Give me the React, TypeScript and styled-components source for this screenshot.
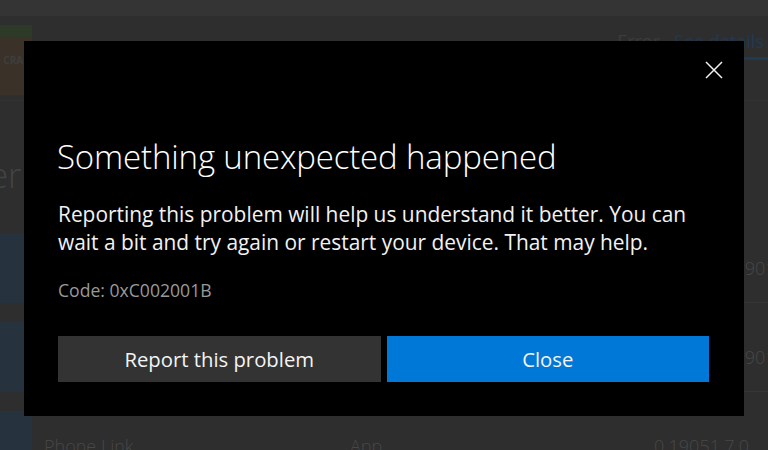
import React from "react";
import styled, { createGlobalStyle } from "styled-components";

const Global = createGlobalStyle`
  html, body { margin: 0; padding: 0; background: #2e2e2e; }
  body { width: 768px; height: 450px; overflow: hidden; font-family: "Open Sans", "Noto Sans", sans-serif; }
  * { box-sizing: border-box; }
`;

const Page = styled.div`
  position: relative;
  width: 768px;
  height: 450px;
  overflow: hidden;
  background: #2e2e2e;
  display: flex;
  flex-direction: column;
`;

const TitleBar = styled.div`
  height: 16px;
  background: #343434;
  flex: none;
`;

const TopSection = styled.div`
  height: 84px;
  display: flex;
  justify-content: space-between;
  flex: none;
`;

const Thumb = styled.div<{ $kind: "craft" | "blue" }>`
  width: 32px;
  height: 70px;
  margin-top: ${(p) => (p.$kind === "craft" ? "9px" : "0")};
  flex: none;
  background: ${(p) =>
    p.$kind === "craft"
      ? "linear-gradient(#2c3a27 0 12px, #3a3128 12px 100%)"
      : "#26323d"};
  display: flex;
  align-items: center;
  justify-content: center;
  color: #3e3e3e;
  font-size: 10px;
  font-weight: 700;
  overflow: hidden;
`;

const StatusGroup = styled.div`
  display: flex;
  flex-direction: column;
  align-items: flex-end;
  padding-top: 12px;
`;

const StatusText = styled.div`
  display: flex;
  gap: 14px;
  font-size: 18px;
  line-height: 26px;
  padding-right: 4px;
  white-space: nowrap;
`;

const ErrorLabel = styled.span`
  color: #3c3c3c;
`;

const DetailsLink = styled.span`
  color: #213a50;
`;

const Underline = styled.div`
  width: 24px;
  height: 3px;
  margin-top: 3px;
  background: #1f3a52;
`;

const SectionHeading = styled.div`
  height: 133px;
  flex: none;
  border-top: 1px solid #333;
  display: flex;
  align-items: center;
  padding-top: 16px;
  margin-left: -68px;
  font-size: 34px;
  font-weight: 300;
  color: #444;
  white-space: nowrap;
`;

const Row = styled.div`
  height: 89px;
  flex: none;
  display: flex;
  align-items: flex-start;
`;

const RowBody = styled.div`
  flex: 1;
  height: 70px;
  display: grid;
  grid-template-columns: 306px 304px 1fr;
  align-items: center;
  padding-left: 12px;
  font-size: 18px;
  color: #474747;
  font-weight: 300;
  border-bottom: 1px solid #363636;
  white-space: nowrap;
`;

const Overlay = styled.div`
  position: absolute;
  left: 24px;
  top: 41px;
  width: 720px;
  height: 375px;
  background: #000;
  padding: 0 35px 0 34px;
  display: flex;
  flex-direction: column;
`;

const CloseIcon = styled.button`
  position: absolute;
  right: 21px;
  top: 20px;
  width: 18px;
  height: 18px;
  padding: 0;
  border: 0;
  background: transparent;
  display: flex;
`;

const Title = styled.h1`
  margin: 96px 0 0 -1px;
  font-size: 33px;
  line-height: 40px;
  font-weight: 300;
  color: #fff;
  letter-spacing: -0.15px;
  white-space: nowrap;
`;

const Body = styled.p`
  margin: 23px 0 0 0;
  max-width: 635px;
  font-size: 20.9px;
  line-height: 28px;
  color: #f2f2f2;
  font-weight: 400;
`;

const Code = styled.p`
  margin: 23px 0 0 0;
  font-size: 17.6px;
  line-height: 22px;
  color: #999;
`;

const Buttons = styled.div`
  margin-top: 35px;
  display: grid;
  grid-template-columns: 1fr 1fr;
  gap: 6px;
`;

const Btn = styled.button<{ $primary?: boolean }>`
  height: 46px;
  border: 0;
  padding: 0;
  font-family: inherit;
  font-size: 20.3px;
  color: #f4f4f4;
  background: ${(p) => (p.$primary ? "#0078d7" : "#333333")};
`;

export default function App() {
  return (
    <>
      <Global />
      <Page>
        <TitleBar />
        <TopSection>
          <Thumb $kind="craft">CRAF</Thumb>
          <StatusGroup>
            <StatusText>
              <ErrorLabel>Error</ErrorLabel>
              <DetailsLink>See details</DetailsLink>
            </StatusText>
            <Underline />
          </StatusGroup>
        </TopSection>
        <SectionHeading>Other</SectionHeading>
        <Row>
          <Thumb $kind="blue" />
          <RowBody>
            <span>Xbox Game Bar</span>
            <span>App</span>
            <span>10.2305.11901.0</span>
          </RowBody>
        </Row>
        <Row>
          <Thumb $kind="blue" />
          <RowBody>
            <span>Movies &amp; TV</span>
            <span>App</span>
            <span>10.2207.21901.0</span>
          </RowBody>
        </Row>
        <Row>
          <Thumb $kind="blue" />
          <RowBody>
            <span>Phone Link</span>
            <span>App</span>
            <span>0.19051.7.0</span>
          </RowBody>
        </Row>
        <Overlay role="dialog">
          <CloseIcon aria-label="Close">
            <svg width="18" height="18" viewBox="0 0 18 18">
              <path d="M1 1 L17 17 M17 1 L1 17" stroke="#f2f2f2" strokeWidth="1.5" fill="none" />
            </svg>
          </CloseIcon>
          <Title>Something unexpected happened</Title>
          <Body>
            Reporting this problem will help us understand it better. You can
            wait a bit and try again or restart your device. That may help.
          </Body>
          <Code>Code: 0xC002001B</Code>
          <Buttons>
            <Btn>Report this problem</Btn>
            <Btn $primary>Close</Btn>
          </Buttons>
        </Overlay>
      </Page>
    </>
  );
}
